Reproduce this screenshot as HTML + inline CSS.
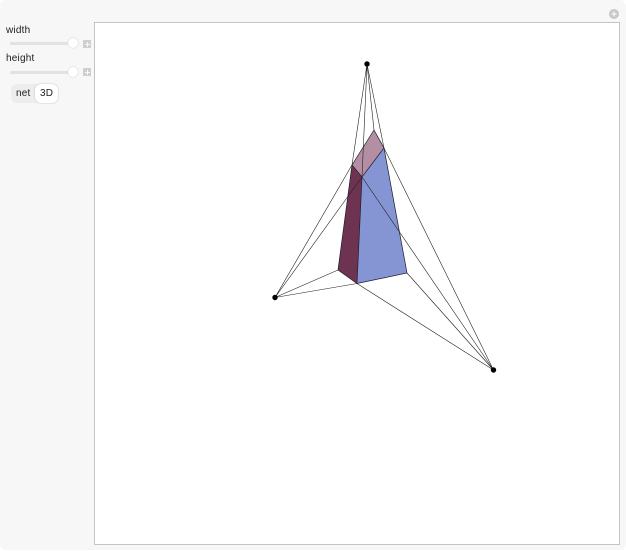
<!DOCTYPE html>
<html><head><meta charset="utf-8"><style>
html,body{margin:0;padding:0;background:#fff}
#p{position:relative;width:626px;height:551px;overflow:hidden;background:#fff}
#bg{position:absolute;left:0;top:0;width:626px;height:550px;background:#f7f7f7;border-radius:6px}
#f{position:absolute;left:94px;top:22px;width:524px;height:521px;background:#fff;border:1px solid #c4c4c4;box-sizing:content-box}
.t{position:absolute;font:10px/12px "Liberation Sans",sans-serif;color:#1c1c1c;letter-spacing:.2px}
.tr{position:absolute;left:10px;width:60px;height:3px;background:#e2e2e2;border-radius:2px}
.k{position:absolute;left:68px;width:10px;height:10px;border-radius:50%;background:#fff;box-shadow:0 0 1.5px #bbb}
.pl{position:absolute;left:83px;width:8px;height:8px;background:#cfcfcf}
.pl:before{content:"";position:absolute;left:3.5px;top:1.5px;width:1px;height:5px;background:#f7f7f7}
.pl:after{content:"";position:absolute;left:1.5px;top:3.5px;width:5px;height:1px;background:#f7f7f7}
#g{position:absolute;left:11px;top:84px;width:47px;height:19px;background:#ededed;border-radius:6px}
#b{position:absolute;left:24px;top:0;width:23px;height:19px;box-sizing:border-box;background:#fff;border-radius:6px;box-shadow:0 0 1.5px #aaa}
svg{position:absolute;left:0;top:0}
</style></head><body><div id="p">
<div id="bg"></div>
<div id="f"></div>
<div class="t" style="left:6px;top:24px;margin-top:0.5px">width</div>
<div class="tr" style="top:42px"></div><div class="k" style="top:38px"></div><div class="pl" style="top:40px"></div>
<div class="t" style="left:6px;top:53px">height</div>
<div class="tr" style="top:71px"></div><div class="k" style="top:67px"></div><div class="pl" style="top:68px"></div>
<div id="g"><div id="b"></div></div>
<div class="t" style="left:16px;top:88px">net</div>
<div class="t" style="left:40px;top:88px">3D</div>
<svg width="626" height="551" viewBox="0 0 626 551">
<circle cx="614" cy="14" r="5" fill="#c8c8c8"/>
<path d="M611.5 14h5M614 11.5v5" stroke="#f7f7f7" stroke-width="1.3"/>
<polygon points="338,270 357,283.5 362,177 352,165" fill="#6f3352"/>
<polygon points="357,283.5 407,273 384,148 362,177" fill="#8594d2"/>
<polygon points="352,165 374,130 384,148 362,177" fill="#b48ea3"/>
<g stroke="#1c1c2c" stroke-width=".7" fill="none">
<path d="M338,270L357,283.5L407,273L384,148L374,130L352,165L338,270"/>
<path d="M352,165L362,177L384,148M362,177L357,283.5"/>
</g>
<g stroke="#222" stroke-width=".6" fill="none">
<path d="M367,64L352,165M367,64L362,177M367,64L374,130M367,64L384,148"/>
<path d="M275,297.5L338,270M275,297.5L357,283.5M275,297.5L352,165M275,297.5L362,177"/>
<path d="M493.5,370L407,273M493.5,370L357,283.5M493.5,370L384,148M493.5,370L362,177"/>
</g>
<circle cx="367" cy="64" r="2.7" fill="#000"/>
<circle cx="275" cy="297.5" r="2.7" fill="#000"/>
<circle cx="493.5" cy="370" r="2.7" fill="#000"/>
</svg>
</div></body></html>
